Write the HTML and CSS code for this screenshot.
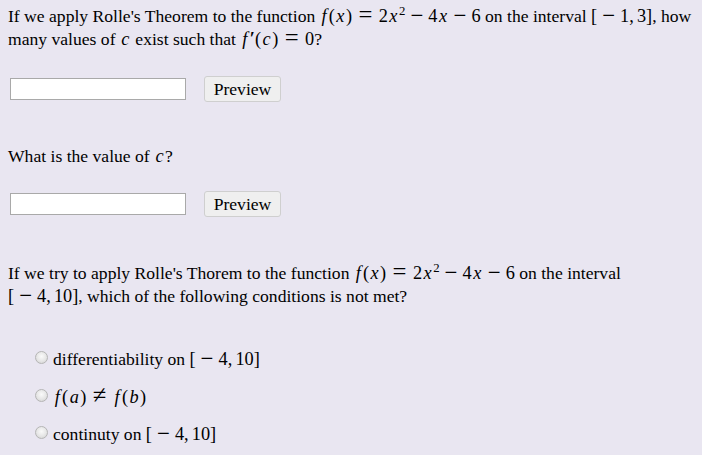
FILE: index.html
```html
<!DOCTYPE html>
<html lang="en">
<head>
  <meta charset="UTF-8" />
  <title>Rolle's Theorem</title>
  <link rel="stylesheet" href="styles.css">
</head>
<body>

  <p class="q">If we apply Rolle's Theorem to the function <span class="m"><i class="f">f</i>(<i>x</i>)<span class="rel">=</span>2<i>x</i><sup>2</sup><span class="bin">−</span>4<i>x</i><span class="bin">−</span>6</span> on the interval <span class="m">[<span class="bin">−</span>1,<span class="th"></span>3]</span>, how many values of <span class="m"><i>c</i></span> exist such that <span class="m"><i class="f">f</i><span class="pr">′</span>(<i>c</i>)<span class="rel">=</span>0</span>?</p>
  <div class="answer">
    <input type="text" />
    <button type="button" class="btn">Preview</button>
  </div>

  <p class="q q2">What is the value of <span class="m"><i>c</i></span>?</p>
  <div class="answer answer2">
    <input type="text" />
    <button type="button" class="btn">Preview</button>
  </div>

  <p class="q q3">If we try to apply Rolle's Thorem to the function <span class="m"><i class="f">f</i>(<i>x</i>)<span class="rel">=</span>2<i>x</i><sup>2</sup><span class="bin">−</span>4<i>x</i><span class="bin">−</span>6</span> on the interval <span class="m">[<span class="bin">−</span>4,<span class="th"></span>10]</span>, which of the following conditions is not met?</p>

  <div class="choices">
    <label class="choice"><input type="radio" name="cond" /><span>differentiability on <span class="m">[<span class="bin">−</span>4,<span class="th"></span>10]</span></span></label>
    <label class="choice"><input type="radio" name="cond" /><span class="m"><i class="f">f</i>(<i>a</i>)<span class="rel">≠</span><i class="f">f</i>(<i>b</i>)</span></label>
    <label class="choice"><input type="radio" name="cond" /><span>continuty on <span class="m">[<span class="bin">−</span>4,<span class="th"></span>10]</span></span></label>
  </div>

</body>
</html>
```

FILE: styles.css
```css
body {
  margin: 0;
  padding: 5px 8px;
  background: #e9e6f1;
  color: #000;
  font-family: "Liberation Serif", "Times New Roman", serif;
  font-size: 17.6px;
  line-height: 23px;
}
.q {
  margin: 0;
}
.q2 {
  margin-top: 43px;
}
.q3 {
  margin-top: 45px;
}
.m {
  font-size: 1.04em;
}
.m i {
  font-style: italic;
  padding: 0 0.08em;
}
.m i.f {
  padding: 0 0.12em 0 0.1em;
}
.m sup {
  font-size: 0.7em;
  line-height: 0;
  vertical-align: 0.55em;
}
.rel {
  font-size: 1.35em;
  line-height: 0;
  vertical-align: -0.04em;
  margin: 0 0.26em;
}
.bin {
  font-size: 1.25em;
  line-height: 0;
  vertical-align: -0.03em;
  margin: 0 0.22em;
}
.th {
  margin-left: 0.17em;
}
.pr {
  margin-left: 0.02em;
  font-weight: bold;
}
.answer {
  display: flex;
  align-items: center;
  gap: 18px;
  margin: 25px 0 0 2px;
}
.answer2 {
  margin-top: 23px;
}
.answer input {
  width: 176px;
  height: 22px;
  box-sizing: border-box;
  margin: 0;
  padding: 0 2px;
  border: 1px solid #a9a9a9;
  background: #fff;
}
.btn {
  width: 77px;
  height: 26px;
  box-sizing: border-box;
  padding: 0;
  border: 1px solid #cfcfcf;
  border-radius: 3px;
  background: #efefef;
  color: #000;
  font-family: inherit;
  font-size: 17.6px;
}
.choices {
  margin-top: 40px;
  padding-left: 27px;
}
.choice {
  display: block;
  margin-bottom: 14.5px;
}
.choice input {
  appearance: none;
  width: 13px;
  height: 13px;
  margin: 0 5px 0 0;
  vertical-align: 1px;
  border: 1px solid #b5b5b5;
  border-radius: 50%;
  background: radial-gradient(circle at 50% 40%, #fafafa 0%, #e6e6e6 55%, #cfcfcf 100%);
}
```
